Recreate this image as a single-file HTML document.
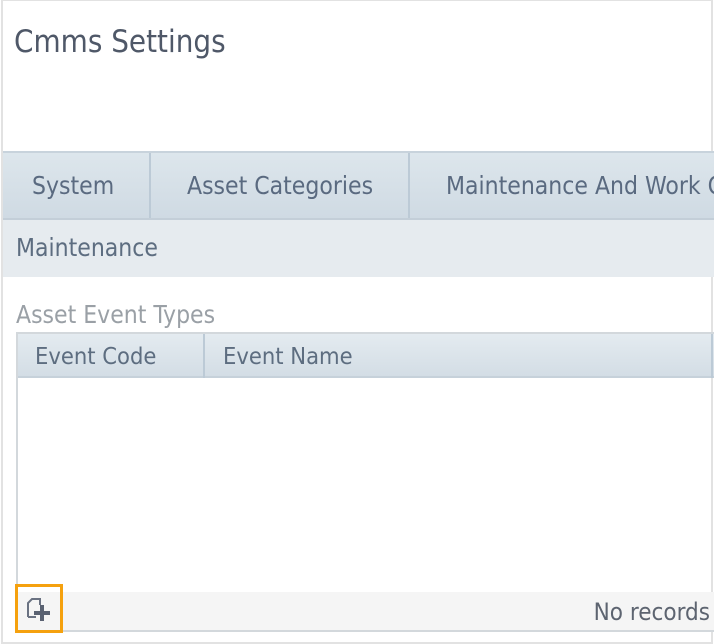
<!DOCTYPE html>
<html><head><style>
*{margin:0;padding:0;box-sizing:border-box}
body{width:714px;height:644px;background:#fff;font-family:"DejaVu Sans Condensed","DejaVu Sans",sans-serif;position:relative;overflow:hidden}
.frame{position:absolute;left:1px;top:0;width:712px;height:644px;border:2px solid #e2e2e2;border-top:1px solid #e2e2e2}
.title{position:absolute;left:14px;top:24px;font-size:31px;color:#4f5868}
.tabs{position:absolute;left:3px;top:151px;width:711px;height:69px;overflow:hidden;background:linear-gradient(#dde6ec,#cfdae3);border-top:2px solid #c8d3dc;border-bottom:2px solid #c3ced8}
.tab{position:absolute;top:0;height:67px;line-height:66px;font-size:24.5px;color:#5a6a80;white-space:nowrap}
.sep{position:absolute;top:0;width:2px;height:67px;background:#bccad6}
.sub{position:absolute;left:3px;top:220px;width:711px;height:57px;background:#e6ebef;font-size:24.5px;color:#5d6d80;padding-left:13px;line-height:56px}
.lbl{position:absolute;left:16px;top:300px;font-size:24.5px;color:#9aa0a6}
.grid{position:absolute;left:16px;top:332px;width:698px;height:300px;border:2px solid #d3d8dc;border-right:none;overflow:hidden}
.hdr{position:absolute;left:0;top:0;width:696px;height:44px;background:linear-gradient(#e4ebf0,#d3dde5);border-bottom:2px solid #c6d1da}
.hdr span{position:absolute;top:0;line-height:44px;font-size:23.5px;color:#5d6d80}
.foot{position:absolute;left:0;top:258px;width:696px;height:40px;background:#f5f5f5;border-bottom:2px solid #d0d4d8}
.nr{position:absolute;right:4px;top:0;line-height:40px;font-size:24px;color:#5d6470}
.add{position:absolute;left:15px;top:584px;width:48px;height:49px;border:3px solid #f5a10e}
</style></head><body>
<div class="frame"></div>
<div class="title">Cmms Settings</div>
<div class="tabs">
<div class="tab" style="left:29px">System</div>
<div class="sep" style="left:146px"></div>
<div class="tab" style="left:184px">Asset Categories</div>
<div class="sep" style="left:405px"></div>
<div class="tab" style="left:443px">Maintenance And Work Orders</div>
</div>
<div class="sub">Maintenance</div>
<div class="lbl">Asset Event Types</div>
<div class="grid">
<div class="hdr"><span style="left:17px">Event Code</span><div style="position:absolute;left:185px;top:0;width:2px;height:44px;background:#bccad6"></div><span style="left:205px">Event Name</span><div style="position:absolute;left:693px;top:0;width:2px;height:44px;background:#bccad6"></div></div>
<div class="foot"><div class="nr">No records</div></div>
</div>
<div class="add"><svg width="42" height="43" viewBox="0 0 42 43"><path d="M10 30V16l4-4h8v6" fill="none" stroke="#6a7282" stroke-width="2"/><path d="M10 30h8" stroke="#6a7282" stroke-width="2"/><path d="M24 18v16M16 26h16" stroke="#5a6272" stroke-width="4"/></svg></div>
</body></html>
